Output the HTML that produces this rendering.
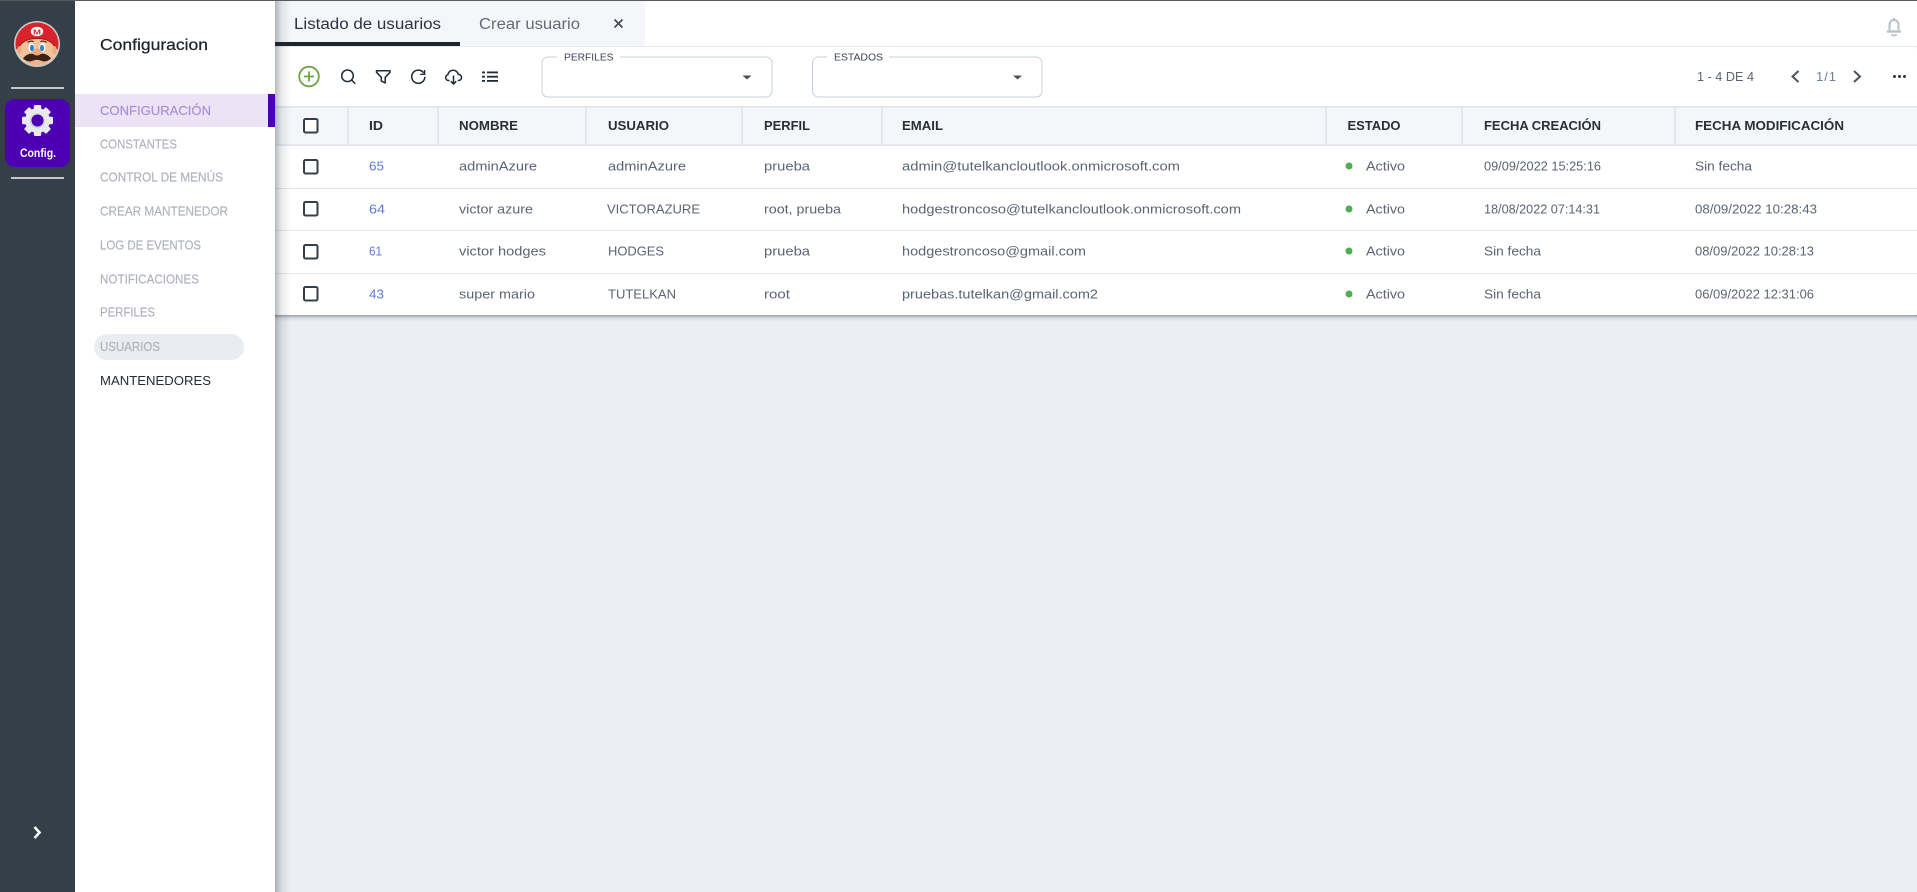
<!DOCTYPE html>
<html lang="es"><head><meta charset="utf-8"><title>Usuarios</title>
<style>
html,body{margin:0;padding:0;width:1917px;height:892px;overflow:hidden;background:#ebeef3}
svg{display:block}
text{font-family:"Liberation Sans",sans-serif;font-size:13px;fill:#5b6472}
.h{font-weight:bold;fill:#2a3038;font-size:13px}
.m{font-size:12.5px;fill:#aeb2bb;stroke:#aeb2bb;stroke-width:.15}
.id{fill:#5f78d8}
</style></head><body>
<svg width="1917" height="892" viewBox="0 0 1917 892" xmlns="http://www.w3.org/2000/svg">
<defs>
<linearGradient id="sr" x1="0" x2="1" y1="0" y2="0"><stop offset="0" stop-color="#1e2833" stop-opacity=".32"/><stop offset=".4" stop-color="#1e2833" stop-opacity=".1"/><stop offset="1" stop-color="#1e2833" stop-opacity="0"/></linearGradient>
<linearGradient id="sb" x1="0" x2="0" y1="0" y2="1"><stop offset="0" stop-color="#1e2833" stop-opacity=".45"/><stop offset=".4" stop-color="#1e2833" stop-opacity=".1"/><stop offset="1" stop-color="#1e2833" stop-opacity="0"/></linearGradient>
<clipPath id="av"><circle cx="37" cy="44" r="21.5"/></clipPath>
</defs>

<!-- backgrounds -->
<rect width="1917" height="892" fill="#ebeef3"/>
<rect x="275" y="1" width="1642" height="45" fill="#fff"/>
<rect x="275" y="1" width="370" height="45" fill="#f4f6f9"/>
<rect x="275" y="46" width="1642" height="270" rx="4" fill="#fff"/>
<rect x="275" y="46" width="1642" height="1" fill="#e9ebef"/>

<!-- table bottom shadow -->
<rect x="275" y="315" width="1642" height="7" fill="url(#sb)"/>
<rect x="275" y="107" width="1642" height="38" fill="#f4f6f9"/>
<rect x="275" y="106" width="1642" height="2" fill="#e4e8ee"/>
<rect x="275" y="144" width="1642" height="2" fill="#e4e8ee"/>
<g fill="#e4e8ee">
<rect x="347" y="107" width="2" height="38"/><rect x="437" y="107" width="2" height="38"/><rect x="585" y="107" width="2" height="38"/><rect x="741" y="107" width="2" height="38"/><rect x="881" y="107" width="2" height="38"/><rect x="1325" y="107" width="2" height="38"/><rect x="1461" y="107" width="2" height="38"/><rect x="1674" y="107" width="2" height="38"/>
</g>
<g fill="#e3e5e8">
<rect x="275" y="188" width="1642" height="1"/><rect x="275" y="230" width="1642" height="1"/><rect x="275" y="273" width="1642" height="1"/>
</g>

<!-- tabs -->
<rect x="275" y="42" width="185" height="4" fill="#1e262d"/>
<text x="294" y="29" style="font-size:15.5px;fill:#2c3440" textLength="147" lengthAdjust="spacingAndGlyphs">Listado de usuarios</text>
<text x="479" y="29" style="font-size:15.5px;fill:#666b72" textLength="101" lengthAdjust="spacingAndGlyphs">Crear usuario</text>
<path d="M614.500 19.500l8 8M622.500 19.500l-8 8" stroke="#4a4f55" stroke-width="1.800" fill="none"/>

<!-- bell -->
<g fill="none" stroke="#b7bfc7" stroke-width="2">
<path d="M1889.500 30v-5.500a4.500 4.500 0 0 1 9 0v5.500"/><path d="M1887 31.500h14" stroke-width="2.400"/><path d="M1891.500 34.200a2.600 1.800 0 0 0 5 0" stroke-width="1.600"/><path d="M1894 18v2"/>
</g>

<!-- toolbar icons -->
<circle cx="309" cy="76.500" r="9.800" fill="none" stroke="#6ea644" stroke-width="1.800"/>
<path d="M309 71.500v10M304 76.500h10" stroke="#6ea644" stroke-width="1.800" fill="none"/>
<g fill="none" stroke="#1f2a36" stroke-width="1.500">
<circle cx="347.500" cy="75.800" r="5.800"/><path d="M351.800 80.100l3.400 3.700"/>
<path d="M376.500 70.800h13.500v1.500l-4.800 5v5.600l-3.900-1.800v-3.800l-4.800-5z" stroke-linejoin="round"/>
<path d="M423.600 72.800a6.600 6.600 0 1 0 1.300 4"/><path d="M424.600 70v4.300h-4.300" stroke-width="1.400"/>
<path d="M449.500 80.500h-1a3 3 0 0 1-.6-5.900 5.300 5.300 0 0 1 10.400-.2 3 3 0 0 1 .4 6.100h-1"/><path d="M453.500 75.500v8.300M450.800 81.300l2.700 2.700 2.700-2.700"/>
</g>
<g fill="#1f2a36">
<rect x="487" y="71.500" width="11" height="1.800"/><rect x="487" y="75.800" width="11" height="1.800"/><rect x="487" y="80" width="11" height="1.800"/>
<rect x="482" y="71.500" width="3" height="1.800"/><rect x="482" y="75.800" width="3" height="1.800"/><rect x="482" y="80" width="3" height="1.800"/>
</g>

<!-- filters -->
<rect x="542" y="57" width="230" height="40" rx="6" fill="#fff" stroke="#c6d0da"/>
<rect x="557" y="53" width="63" height="7" fill="#fff"/>
<text x="564" y="60.500" style="font-size:10.500px;fill:#3d4550" textLength="49.500" lengthAdjust="spacingAndGlyphs">PERFILES</text>
<path d="M742.500 75.500h9l-4.500 4z" fill="#4b4f55"/>
<rect x="812.500" y="57" width="229.500" height="40" rx="6" fill="#fff" stroke="#c6d0da"/>
<rect x="827" y="53" width="62" height="7" fill="#fff"/>
<text x="834" y="60.500" style="font-size:10.500px;fill:#3d4550" textLength="49" lengthAdjust="spacingAndGlyphs">ESTADOS</text>
<path d="M1013 75.500h9l-4.500 4z" fill="#4b4f55"/>

<!-- pagination -->
<text x="1697" y="81" style="font-size:12.500px;fill:#5b6472" textLength="57" lengthAdjust="spacingAndGlyphs">1 - 4 DE 4</text>
<path d="M1798.500 71l-6 5.500 6 5.500" stroke="#4d5258" stroke-width="2" fill="none"/>
<text x="1816" y="81" style="font-size:13px;fill:#6f8199" textLength="20" lengthAdjust="spacing">1/1</text>
<path d="M1854 71l6 5.500-6 5.500" stroke="#4d5258" stroke-width="2" fill="none"/>
<g fill="#2f353c"><circle cx="1894.500" cy="76.500" r="1.500"/><circle cx="1899.500" cy="76.500" r="1.500"/><circle cx="1904.500" cy="76.500" r="1.500"/></g>

<!-- checkboxes -->
<g fill="#fff" stroke="#343f47" stroke-width="2">
<rect x="304" y="119" width="13.500" height="13.500" rx="1.500"/>
<rect x="304" y="160" width="13.500" height="13.500" rx="1.500"/>
<rect x="304" y="202" width="13.500" height="13.500" rx="1.500"/>
<rect x="304" y="245" width="13.500" height="13.500" rx="1.500"/>
<rect x="304" y="287" width="13.500" height="13.500" rx="1.500"/>
</g>

<!-- header -->
<text class="h" x="369" y="130" textLength="14" lengthAdjust="spacingAndGlyphs">ID</text>
<text class="h" x="459" y="130" textLength="59" lengthAdjust="spacingAndGlyphs">NOMBRE</text>
<text class="h" x="608" y="130" textLength="61" lengthAdjust="spacingAndGlyphs">USUARIO</text>
<text class="h" x="764" y="130" textLength="46" lengthAdjust="spacingAndGlyphs">PERFIL</text>
<text class="h" x="902" y="130" textLength="41" lengthAdjust="spacingAndGlyphs">EMAIL</text>
<text class="h" x="1347.500" y="130" textLength="53" lengthAdjust="spacingAndGlyphs">ESTADO</text>
<text class="h" x="1484" y="130" textLength="117" lengthAdjust="spacingAndGlyphs">FECHA CREACIÓN</text>
<text class="h" x="1695" y="130" textLength="149" lengthAdjust="spacingAndGlyphs">FECHA MODIFICACIÓN</text>

<!-- rows -->
<text class="id" x="369" y="170.500" textLength="15" lengthAdjust="spacingAndGlyphs">65</text>
<text x="459" y="170.500" textLength="78" lengthAdjust="spacingAndGlyphs">adminAzure</text>
<text x="608" y="170.500" textLength="78" lengthAdjust="spacingAndGlyphs">adminAzure</text>
<text x="764" y="170.500" textLength="46" lengthAdjust="spacingAndGlyphs">prueba</text>
<text x="902" y="170.500" textLength="278" lengthAdjust="spacingAndGlyphs">admin@tutelkancloutlook.onmicrosoft.com</text>
<circle cx="1349" cy="166" r="3.500" fill="#4caf50"/>
<text x="1366" y="170.500" textLength="39" lengthAdjust="spacingAndGlyphs">Activo</text>
<text x="1484" y="170.500" textLength="117" lengthAdjust="spacingAndGlyphs">09/09/2022 15:25:16</text>
<text x="1695" y="170.500" textLength="57" lengthAdjust="spacingAndGlyphs">Sin fecha</text>

<text class="id" x="369" y="213.500" textLength="16" lengthAdjust="spacingAndGlyphs">64</text>
<text x="459" y="213.500" textLength="74" lengthAdjust="spacingAndGlyphs">victor azure</text>
<text x="607" y="213.500" textLength="93" lengthAdjust="spacingAndGlyphs">VICTORAZURE</text>
<text x="764" y="213.500" textLength="77" lengthAdjust="spacingAndGlyphs">root, prueba</text>
<text x="902" y="213.500" textLength="339" lengthAdjust="spacingAndGlyphs">hodgestroncoso@tutelkancloutlook.onmicrosoft.com</text>
<circle cx="1349" cy="209" r="3.500" fill="#4caf50"/>
<text x="1366" y="213.500" textLength="39" lengthAdjust="spacingAndGlyphs">Activo</text>
<text x="1484" y="213.500" textLength="116" lengthAdjust="spacingAndGlyphs">18/08/2022 07:14:31</text>
<text x="1695" y="213.500" textLength="122" lengthAdjust="spacingAndGlyphs">08/09/2022 10:28:43</text>

<text class="id" x="369" y="255.500" textLength="13" lengthAdjust="spacingAndGlyphs">61</text>
<text x="459" y="255.500" textLength="87" lengthAdjust="spacingAndGlyphs">victor hodges</text>
<text x="608" y="255.500" textLength="56" lengthAdjust="spacingAndGlyphs">HODGES</text>
<text x="764" y="255.500" textLength="46" lengthAdjust="spacingAndGlyphs">prueba</text>
<text x="902" y="255.500" textLength="184" lengthAdjust="spacingAndGlyphs">hodgestroncoso@gmail.com</text>
<circle cx="1349" cy="251" r="3.500" fill="#4caf50"/>
<text x="1366" y="255.500" textLength="39" lengthAdjust="spacingAndGlyphs">Activo</text>
<text x="1484" y="255.500" textLength="57" lengthAdjust="spacingAndGlyphs">Sin fecha</text>
<text x="1695" y="255.500" textLength="119" lengthAdjust="spacingAndGlyphs">08/09/2022 10:28:13</text>

<text class="id" x="369" y="298.500" textLength="15" lengthAdjust="spacingAndGlyphs">43</text>
<text x="459" y="298.500" textLength="76" lengthAdjust="spacingAndGlyphs">super mario</text>
<text x="608" y="298.500" textLength="68" lengthAdjust="spacingAndGlyphs">TUTELKAN</text>
<text x="764" y="298.500" textLength="26" lengthAdjust="spacingAndGlyphs">root</text>
<text x="902" y="298.500" textLength="196" lengthAdjust="spacingAndGlyphs">pruebas.tutelkan@gmail.com2</text>
<circle cx="1349" cy="294" r="3.500" fill="#4caf50"/>
<text x="1366" y="298.500" textLength="39" lengthAdjust="spacingAndGlyphs">Activo</text>
<text x="1484" y="298.500" textLength="57" lengthAdjust="spacingAndGlyphs">Sin fecha</text>
<text x="1695" y="298.500" textLength="119" lengthAdjust="spacingAndGlyphs">06/09/2022 12:31:06</text>

<!-- panel shadow -->
<rect x="275" y="1" width="16" height="891" fill="url(#sr)"/>

<!-- secondary sidebar -->
<rect x="75" y="1" width="200" height="891" fill="#fff"/>
<text x="100" y="50" style="font-size:15.500px;fill:#1e2329;stroke:#1e2329;stroke-width:.25" textLength="108" lengthAdjust="spacingAndGlyphs">Configuracion</text>
<rect x="75" y="94" width="200" height="33" fill="#ece4f6"/>
<rect x="268" y="94" width="7" height="33" fill="#4d00b3"/>
<text class="m" x="100" y="115" style="fill:#a98dd8;stroke:#a98dd8" textLength="111" lengthAdjust="spacingAndGlyphs">CONFIGURACIÓN</text>
<text class="m" x="100" y="148.500" textLength="77" lengthAdjust="spacingAndGlyphs">CONSTANTES</text>
<text class="m" x="100" y="181.500" textLength="123" lengthAdjust="spacingAndGlyphs">CONTROL DE MENÚS</text>
<text class="m" x="100" y="215.500" textLength="128" lengthAdjust="spacingAndGlyphs">CREAR MANTENEDOR</text>
<text class="m" x="100" y="249.500" textLength="101" lengthAdjust="spacingAndGlyphs">LOG DE EVENTOS</text>
<text class="m" x="100" y="283.500" textLength="99" lengthAdjust="spacingAndGlyphs">NOTIFICACIONES</text>
<text class="m" x="100" y="316.500" textLength="55" lengthAdjust="spacingAndGlyphs">PERFILES</text>
<rect x="94" y="334" width="150" height="26" rx="13" fill="#e9ecf0"/>
<text class="m" x="100" y="351" textLength="60" lengthAdjust="spacingAndGlyphs">USUARIOS</text>
<text class="m" x="100" y="385" style="fill:#262c36;stroke:none" textLength="111" lengthAdjust="spacingAndGlyphs">MANTENEDORES</text>

<!-- icon rail -->
<rect x="0" y="1" width="75" height="891" fill="#343f47"/>
<circle cx="37" cy="44" r="23" fill="#c9cccd"/>
<g clip-path="url(#av)">
<rect x="14" y="22" width="46" height="44" fill="#f2c29a"/>
<ellipse cx="37" cy="64" rx="11" ry="4" fill="#eeb58a"/>
<path d="M14 50C15 29 25 22 37 22s22 7 23 28l-4-1C53 42 46 38.500 37 38.500S21 42 18 49z" fill="#d9232b"/>
<path d="M18 49C21 42 28 38.500 37 38.500S53 42 56 49" fill="none" stroke="#a9141c" stroke-width="1"/>
<ellipse cx="37" cy="31.500" rx="6.200" ry="4.800" fill="#fff"/>
<text x="33" y="34.500" style="font-size:7.500px;font-weight:bold;fill:#d9232b" textLength="8" lengthAdjust="spacingAndGlyphs">M</text>
<ellipse cx="31.500" cy="47.500" rx="3" ry="4.500" fill="#fff"/><ellipse cx="42.500" cy="47.500" rx="3" ry="4.500" fill="#fff"/>
<ellipse cx="32" cy="48" rx="2" ry="3.300" fill="#2f7fd0"/><ellipse cx="42" cy="48" rx="2" ry="3.300" fill="#2f7fd0"/>
<path d="M27.500 42.500c1.500-1.500 4-1.700 6-.8M40.500 41.700c2-.9 4.500-.7 6 .8" stroke="#3a2412" stroke-width="1.200" fill="none"/>
<path d="M23 58.500c2.500-3.300 6-5 9-4.800 2 .2 3.500 .8 5 .8s3-.6 5-.8c3-.2 6.500 1.500 9 4.800-3 2.800-6.500 3.600-9.500 2.400-1.700-.7-3-1-4.500-1s-2.800 .3-4.500 1c-3 1.200-6.500 .4-9.500-2.400z" fill="#3a2316"/>
<ellipse cx="37" cy="52" rx="4.500" ry="3.500" fill="#eda878"/>
<ellipse cx="19.500" cy="50" rx="2.200" ry="4" fill="#e9ad82"/><ellipse cx="54.500" cy="50" rx="2.200" ry="4" fill="#e9ad82"/>
</g>
<rect x="11" y="87" width="53" height="2" fill="#c5c8ca"/>
<rect x="5" y="99" width="65" height="68" rx="10" fill="#4d00b3"/>
<g fill="#e8eaeb">
<circle cx="37.500" cy="120.500" r="12.500"/>
<rect x="33.800" y="105" width="7.400" height="31" rx="1.200"/>
<rect x="33.800" y="105" width="7.400" height="31" rx="1.200" transform="rotate(45 37.500 120.500)"/>
<rect x="33.800" y="105" width="7.400" height="31" rx="1.200" transform="rotate(90 37.500 120.500)"/>
<rect x="33.800" y="105" width="7.400" height="31" rx="1.200" transform="rotate(135 37.500 120.500)"/>
</g>
<circle cx="37.500" cy="120.800" r="7.600" fill="#d2d3d6"/>
<circle cx="37.500" cy="120.500" r="6" fill="#4d00b3"/>
<text x="20" y="157" style="font-size:11.500px;font-weight:bold;fill:#fff" textLength="36" lengthAdjust="spacingAndGlyphs">Config.</text>
<rect x="11" y="177" width="53" height="2" fill="#c5c8ca"/>
<path d="M34.500 827l5 5.500-5 5.500" stroke="#fff" stroke-width="2.600" fill="none"/>

<!-- top hairline -->
<rect x="0" y="0" width="1917" height="1" fill="#585b5e"/>
</svg>
</body></html>
